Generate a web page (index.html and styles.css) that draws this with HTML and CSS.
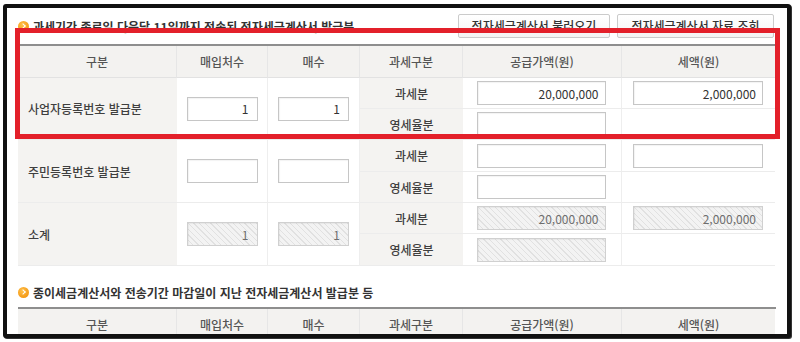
FILE: index.html
```html
<!DOCTYPE html>
<html lang="ko">
<head>
<meta charset="utf-8">
<link rel="stylesheet" href="styles.css">
</head>
<body>
<div class="frame">
  <div class="section-head">
    <h2 class="title"><span class="dot"></span>과세기간 종료일 다음달 11일까지 전송된 전자세금계산서 발급분</h2>
    <div class="btns">
      <button class="btn">전자세금계산서 불러오기</button>
      <button class="btn">전자세금계산서 자료 조회</button>
    </div>
  </div>
  <div class="grid">
    <div class="th">구분</div>
    <div class="th">매입처수</div>
    <div class="th">매수</div>
    <div class="th">과세구분</div>
    <div class="th">공급가액(원)</div>
    <div class="th last">세액(원)</div>

    <div class="cat span2">사업자등록번호 발급분</div>
    <div class="cell span2"><input class="inp small" value="1" readonly></div>
    <div class="cell span2"><input class="inp small" value="1" readonly></div>
    <div class="sub">과세분</div>
    <div class="cell"><input class="inp amt" value="20,000,000" readonly></div>
    <div class="cell last"><input class="inp tax" value="2,000,000" readonly></div>
    <div class="sub">영세율분</div>
    <div class="cell"><input class="inp amt" value="" readonly></div>
    <div class="cell last"></div>

    <div class="cat span2">주민등록번호 발급분</div>
    <div class="cell span2"><input class="inp small" value="" readonly></div>
    <div class="cell span2"><input class="inp small" value="" readonly></div>
    <div class="sub tall">과세분</div>
    <div class="cell tall"><input class="inp amt" value="" readonly></div>
    <div class="cell tall last"><input class="inp tax" value="" readonly></div>
    <div class="sub">영세율분</div>
    <div class="cell"><input class="inp amt" value="" readonly></div>
    <div class="cell last"></div>

    <div class="cat span2">소계</div>
    <div class="cell span2"><input class="inp small off" value="1" readonly></div>
    <div class="cell span2"><input class="inp small off" value="1" readonly></div>
    <div class="sub">과세분</div>
    <div class="cell"><input class="inp amt off" value="20,000,000" readonly></div>
    <div class="cell last"><input class="inp tax off" value="2,000,000" readonly></div>
    <div class="sub">영세율분</div>
    <div class="cell"><input class="inp amt off" value="" readonly></div>
    <div class="cell last"></div>
  </div>

  <div class="section-head second">
    <h2 class="title"><span class="dot"></span>종이세금계산서와 전송기간 마감일이 지난 전자세금계산서 발급분 등</h2>
  </div>
  <div class="grid">
    <div class="th">구분</div>
    <div class="th">매입처수</div>
    <div class="th">매수</div>
    <div class="th">과세구분</div>
    <div class="th">공급가액(원)</div>
    <div class="th last">세액(원)</div>
  </div>

  <div class="highlight"></div>
</div>
</body>
</html>
```

FILE: styles.css
```css
* { box-sizing: border-box; }

html, body {
  margin: 0;
  padding: 0;
  background: #fff;
  width: 800px;
  height: 342px;
  overflow: hidden;
}

body {
  font-family: "Noto Sans CJK KR", "Noto Sans", sans-serif;
  font-size: 12px;
  font-weight: 500;
  color: #444;
}

.frame {
  position: relative;
  margin: 4px 0 0 3px;
  width: 788px;
  height: 334px;
  border: 4px solid #111;
  border-radius: 3px;
  padding: 0 11px;
  overflow: hidden;
  background: #fff;
  box-shadow: 1px 1px 0 #333;
}

.section-head {
  display: flex;
  align-items: center;
  justify-content: space-between;
  height: 24px;
  margin: 6px 0 6px;
}

.section-head.second {
  margin: 14px 0 3px;
}

.title {
  display: flex;
  align-items: center;
  margin: 0;
  font-size: 12px;
  font-weight: bold;
  color: #333;
  white-space: nowrap;
}

.dot {
  position: relative;
  width: 11px;
  height: 11px;
  border-radius: 50%;
  background: radial-gradient(circle at 40% 35%, #ffc04a, #f08a00);
  margin: 0 4px 0 0;
  flex: none;
}

.dot::after {
  content: "";
  position: absolute;
  left: 3px;
  top: 3.5px;
  width: 3px;
  height: 3px;
  border-top: 1.5px solid #fff;
  border-right: 1.5px solid #fff;
  transform: rotate(45deg);
}

.btns {
  display: flex;
  gap: 7px;
  margin-right: 2px;
}

.btn {
  height: 24px;
  padding: 0 8px;
  border: 1px solid #cbcbcb;
  border-radius: 2px;
  background: linear-gradient(#ffffff, #f4f4f4);
  font-family: "Noto Sans CJK KR", "Noto Sans", sans-serif;
  font-size: 12px;
  font-weight: 500;
  color: #333;
  line-height: 22px;
}

.btn:first-child { width: 152px; }
.btn:last-child { width: 157px; }

.grid {
  display: grid;
  grid-template-columns: 159px 91px 92px 103px 159px 153px;
  grid-template-rows: 32px 31px 31px 32px 31px 31px 32px;
  border-top: 2px solid #8e8e8e;
}

.th {
  display: flex;
  align-items: center;
  justify-content: center;
  background: #f3f2f0;
  color: #555;
  border-bottom: 1px solid #e2e2e2;
  border-right: 1px solid #e6e6e6;
}

.th.last, .cell.last { border-right: 0; }

.cat {
  display: flex;
  align-items: center;
  padding-left: 10px;
  background: #f4f3f1;
  color: #3f3f3f;
  border-bottom: 1px solid #ececec;
}

.span2 { grid-row: span 2; }

.sub {
  display: flex;
  align-items: center;
  justify-content: center;
  background: #f4f3f1;
  color: #3f3f3f;
  border-bottom: 1px solid #ececec;
}

.cell {
  display: flex;
  align-items: center;
  justify-content: center;
  background: #fff;
  border-bottom: 1px solid #ececec;
  border-right: 1px solid #eeeeee;
}

.inp {
  height: 24px;
  border: 1px solid #c6c6c6;
  background: #fff;
  box-shadow: inset 1px 1px 1px rgba(0,0,0,0.05);
  padding: 0 6px 0 4px;
  text-align: right;
  font-family: "Noto Sans CJK KR", "Noto Sans", sans-serif;
  font-size: 12px;
  color: #333;
  outline: none;
}

.inp.small { width: 71px; padding-right: 8px; }
.inp.amt { width: 129px; margin-left: -2px; }
.inp.tax { width: 130px; margin-left: -1px; }

.inp.off {
  color: #6e6e6e;
  border-color: #d0d0d0;
  background:
    repeating-linear-gradient(45deg, #f3f3f3 0, #f3f3f3 3px, #e1e1e1 3px, #e1e1e1 4px);
}

.highlight {
  position: absolute;
  left: 8px;
  top: 20px;
  width: 765px;
  height: 111px;
  border: 5px solid #e3202a;
  pointer-events: none;
}
```
